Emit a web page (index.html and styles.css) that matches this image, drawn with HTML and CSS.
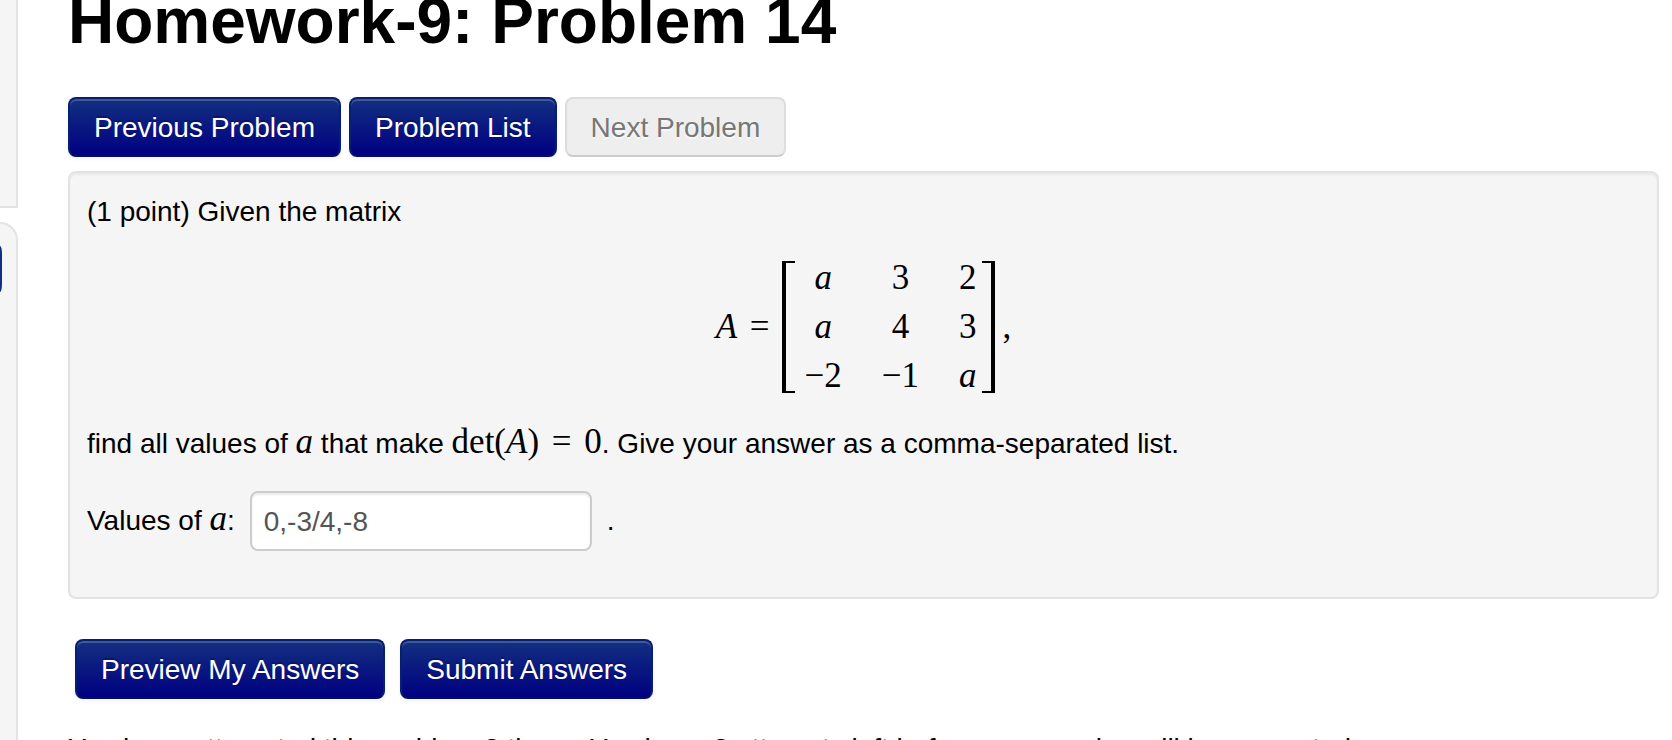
FILE: index.html
```html
<!DOCTYPE html>
<html lang="en">
<head>
    <meta charset="UTF-8">
    <meta name="viewport" content="width=device-width, initial-scale=1.0">
    <title>Homework-9: Problem 14</title>
    <link rel="stylesheet" href="styles.css">
</head>
<body>
    <div class="page">
        <aside class="sidebar">
            <div class="panel panel-menu"></div>
            <div class="panel panel-progress">
                <span class="progress-btn"></span>
            </div>
        </aside>

        <main class="content">
            <h1>Homework-9: Problem 14</h1>

            <nav class="problem-nav">
                <a class="btn btn-primary" href="#previous">Previous Problem</a>
                <a class="btn btn-primary" href="#list">Problem List</a>
                <button class="btn" type="button" disabled>Next Problem</button>
            </nav>

            <form>
                <div class="problem">
                    <p>(1 point) Given the matrix</p>

                    <div class="equation">
                        <span class="lhs"><i>A</i> <span class="rel">=</span></span>
                        <div class="matrix">
                            <span><i>a</i></span><span>3</span><span>2</span>
                            <span><i>a</i></span><span>4</span><span>3</span>
                            <span>−2</span><span>−1</span><span><i>a</i></span>
                        </div>
                        <span class="comma">,</span>
                    </div>

                    <p>find all values of <span class="math"><i>a</i></span>&nbsp;that make <span class="math">det(<i>A</i>) <span class="rel">=</span> 0</span>. Give your answer as a comma-separated list.</p>

                    <div class="answer">
                        <label for="answer1">Values of <span class="math"><i>a</i></span>:</label>
                        <input type="text" id="answer1" value="0,-3/4,-8">
                        <span>.</span>
                    </div>
                </div>

                <div class="actions">
                    <button class="btn btn-primary" type="button">Preview My Answers</button>
                    <button class="btn btn-primary" type="button">Submit Answers</button>
                </div>
            </form>

            <p class="attempts">You have attempted this problem 8 times. You have 2 attempts left before new version will be requested.</p>
        </main>
    </div>
</body>
</html>
```
FILE: styles.css
```css
* {
    box-sizing: border-box;
}

body {
    margin: 0;
    background: #fff;
    color: #000;
    font-family: "Liberation Sans", Arial, sans-serif;
    font-size: 28px;
    line-height: 40px;
    height: 100vh;
    overflow: hidden;
}

p {
    margin: 0;
}

.page {
    display: flex;
    min-height: 100vh;
}

/* Left column, scrolled mostly out of view */
.sidebar {
    display: flex;
    flex-direction: column;
    flex: none;
    gap: 14px;
    width: 18px;
}

.panel {
    background: #f5f5f5;
    border: 2px solid #e3e3e3;
    border-left: 0;
}

.panel-menu {
    height: 208px;
    border-top: 0;
}

.panel-progress {
    flex: 1;
    padding-top: 22px;
    border-top-right-radius: 18px;
}

.progress-btn {
    display: block;
    width: 2px;
    height: 46px;
    background: #102f80;
    border-radius: 0 2px 2px 0 / 0 8px 8px 0;
}

.content {
    flex: 1;
    padding: 0 13px 0 50px;
}

h1 {
    margin: -19px 0 36px;
    font-size: 64px;
    line-height: 80px;
}

.problem-nav {
    display: flex;
    gap: 8px;
    margin-bottom: 14px;
}

.btn {
    height: 60px;
    padding: 9px 24px 7px;
    border: 2px solid #ddd;
    border-bottom-color: #ccc;
    border-radius: 8px;
    background: #eee;
    color: #777;
    font: inherit;
    text-decoration: none;
    text-shadow: 0 2px 2px rgba(255, 255, 255, 0.75);
}

.btn-primary {
    border-color: #052070;
    border-bottom-color: #001060;
    background: linear-gradient(to bottom, #133080, #000080);
    color: #fff;
    text-shadow: 0 -2px 0 rgba(0, 0, 0, 0.25);
    box-shadow: inset 0 2px 0 rgba(255, 255, 255, 0.2), 0 2px 4px rgba(0, 0, 0, 0.05);
}

.problem {
    padding: 19px 17px 46px;
    border: 2px solid #e3e3e3;
    border-radius: 8px;
    background: #f5f5f5;
    box-shadow: inset 0 2px 2px rgba(0, 0, 0, 0.05);
}

.math,
.equation {
    font-family: "Liberation Serif", "Times New Roman", serif;
    font-size: 35px;
}

/* keep inline math from stretching the text line */
.math {
    line-height: 1px;
}

.rel {
    margin: 0 4px;
}

.equation {
    display: flex;
    align-items: center;
    justify-content: center;
    padding: 29px 0 31px;
}

.lhs {
    margin-right: 8px;
}

.matrix {
    display: grid;
    grid-template-columns: repeat(3, auto);
    grid-auto-rows: 49px;
    column-gap: 40px;
    height: 132px;
    padding: 0 18px 0 23px;
    align-content: center;
    align-items: center;
    justify-items: center;
    /* square brackets: two uprights and four short arms */
    background:
        linear-gradient(#000, #000) left / 4px 100% no-repeat,
        linear-gradient(#000, #000) right / 4px 100% no-repeat,
        linear-gradient(#000, #000) left top / 13px 2px no-repeat,
        linear-gradient(#000, #000) left bottom / 13px 2px no-repeat,
        linear-gradient(#000, #000) right top / 13px 2px no-repeat,
        linear-gradient(#000, #000) right bottom / 13px 2px no-repeat;
}

.comma {
    margin-left: 8px;
}

.answer {
    display: flex;
    align-items: center;
    gap: 15px;
    margin-top: 27px;
}

.answer input {
    width: 342px;
    height: 60px;
    padding: 9px 12px 7px;
    border: 2px solid #ccc;
    border-radius: 8px;
    background: #fff;
    box-shadow: inset 0 2px 2px rgba(0, 0, 0, 0.075);
    color: #555;
    font: inherit;
}

.actions {
    display: flex;
    gap: 15px;
    padding: 40px 7px 30px;
}

.attempts {
    white-space: nowrap;
}
```
